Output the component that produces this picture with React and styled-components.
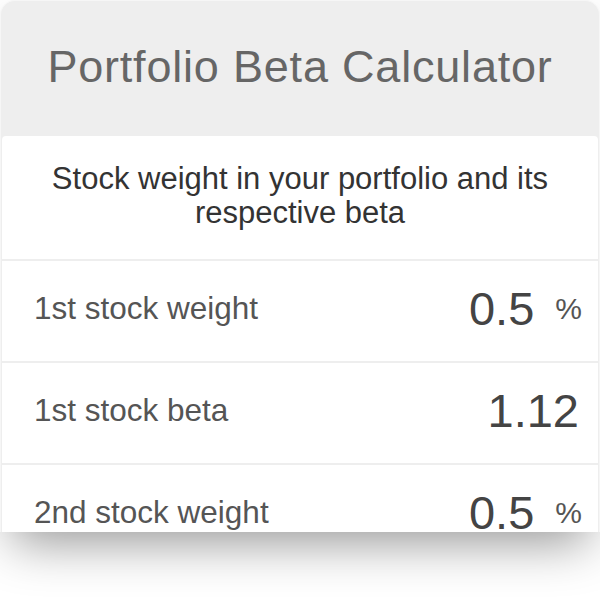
import React from 'react';
import styled, { createGlobalStyle } from 'styled-components';

const GlobalStyle = createGlobalStyle`
    html, body {
        margin: 0;
        padding: 0;
        background: #ffffff;
    }
    body {
        font-family: 'Liberation Sans', Arial, Helvetica, sans-serif;
    }
`;

const Page = styled.div`
    width: 600px;
    height: 600px;
    overflow: hidden;
    background: #ffffff;
`;

const Card = styled.div`
    width: 600px;
    height: 532px;
    box-sizing: border-box;
    overflow: hidden;
    display: flex;
    flex-direction: column;
    background-color: #eeeeee;
    border: 1px solid #f6f6f6;
    border-bottom: none;
    border-radius: 15px 15px 0 0;
    padding: 0 1px;
    box-shadow: 0 22px 50px -12px rgba(0, 0, 0, 0.42);
`;

const Header = styled.div`
    height: 135px;
    flex-shrink: 0;
    display: flex;
    align-items: center;
    justify-content: center;
    padding-bottom: 4px;
    box-sizing: border-box;
`;

const Title = styled.h1`
    margin: 0;
    font-size: 45px;
    font-weight: 400;
    letter-spacing: 0.8px;
    color: #666666;
`;

const Panel = styled.div`
    display: flex;
    flex-direction: column;
    gap: 2px;
    background-color: #eeeeee;
    border-radius: 4px 4px 0 0;
    overflow: hidden;
`;

const Intro = styled.p`
    margin: 0;
    padding: 26px 40px 29px;
    background-color: #ffffff;
    text-align: center;
    font-size: 31px;
    line-height: 34px;
    color: #333333;
`;

const Row = styled.div`
    height: 100px;
    flex-shrink: 0;
    display: flex;
    align-items: center;
    justify-content: space-between;
    padding: 0 16px 0 32px;
    background-color: #ffffff;
`;

const Label = styled.span`
    font-size: 31.5px;
    color: #555555;
    padding-bottom: 6px;
`;

const ValueGroup = styled.div`
    display: flex;
    align-items: center;
    padding-right: ${(p) => (p.$hasUnit ? '0' : '3px')};
`;

const Value = styled.span`
    font-size: 47px;
    color: #444444;
    padding-bottom: 5px;
`;

const Unit = styled.span`
    font-size: 30px;
    color: #555555;
    margin-left: 21px;
    padding-bottom: 5px;
`;

const rows = [
    { label: '1st stock weight', value: '0.5', unit: '%' },
    { label: '1st stock beta', value: '1.12' },
    { label: '2nd stock weight', value: '0.5', unit: '%' },
];

function App() {
    return (
        <Page>
            <GlobalStyle />
            <Card>
                <Header>
                    <Title>Portfolio Beta Calculator</Title>
                </Header>
                <Panel>
                    <Intro>Stock weight in your portfolio and its respective beta</Intro>
                    {rows.map((row) => (
                        <Row key={row.label}>
                            <Label>{row.label}</Label>
                            <ValueGroup $hasUnit={!!row.unit}>
                                <Value>{row.value}</Value>
                                {row.unit && <Unit>{row.unit}</Unit>}
                            </ValueGroup>
                        </Row>
                    ))}
                </Panel>
            </Card>
        </Page>
    );
}

export default App;
